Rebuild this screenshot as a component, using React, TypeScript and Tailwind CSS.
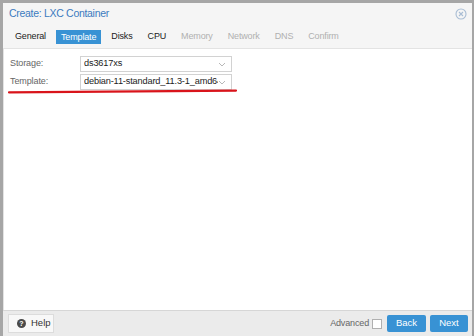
import { useState } from 'react';

const tabs = [
  { label: 'General', enabled: true },
  { label: 'Template', enabled: true },
  { label: 'Disks', enabled: true },
  { label: 'CPU', enabled: true },
  { label: 'Memory', enabled: false },
  { label: 'Network', enabled: false },
  { label: 'DNS', enabled: false },
  { label: 'Confirm', enabled: false },
];

function Chevron() {
  return (
    <svg width="8" height="5" viewBox="0 0 8 5" className="shrink-0">
      <path d="M1 1 L4 4 L7 1" fill="none" stroke="#b8b8b8" strokeWidth="1" />
    </svg>
  );
}

function SelectField({ value }: { value: string }) {
  return (
    <div className="flex items-center w-[152px] h-[16px] border border-[#d2d2d2] bg-white pl-[3px] pr-[5px]">
      <span className="flex-1 overflow-hidden whitespace-nowrap text-[9.2px] tracking-[-0.15px] text-[#222]">{value}</span>
      <Chevron />
    </div>
  );
}

export default function App() {
  const [active] = useState('Template');
  const [advanced, setAdvanced] = useState(false);

  return (
    <div
      className="w-[474px] h-[336px] flex flex-col bg-[#f5f5f5] border-t-[3px] border-l-[3px] border-r-[2px] border-[#a6a6a6] overflow-hidden"
      style={{ fontFamily: '"Liberation Sans", Arial, sans-serif' }}
    >
      <div className="flex items-center justify-between h-[22px] pl-[6px] pr-[5px]">
        <span className="text-[10.5px] tracking-[-0.3px] text-[#3b7bbf]">Create: LXC Container</span>
        <svg width="12" height="12" viewBox="0 0 12 12">
          <circle cx="6" cy="6" r="5" fill="none" stroke="#a9bdd4" strokeWidth="1.1" />
          <path d="M4 4 L8 8 M8 4 L4 8" stroke="#a9bdd4" strokeWidth="1.1" />
        </svg>
      </div>

      <div className="flex items-center h-[23px] pl-[7px] gap-[5px]">
        {tabs.map((t) => (
          <span
            key={t.label}
            className={
              t.label === active
                ? 'px-[5px] h-[14px] leading-[14px] bg-[#3892d4] text-white text-[9px] tracking-[-0.15px]'
                : t.enabled
                ? 'px-[5px] text-[9px] tracking-[-0.15px] text-[#222]'
                : 'px-[5px] text-[9px] tracking-[-0.15px] text-[#b0b0b0]'
            }
          >
            {t.label}
          </span>
        ))}
      </div>

      <div className="flex-1 bg-white border-t border-l border-[#e3e3e3] pl-[6px] pt-[7px]">
        <div className="flex flex-col gap-[2px]">
          <div className="flex items-center">
            <span className="w-[70px] text-[9px] tracking-[-0.1px] text-[#666]">Storage:</span>
            <SelectField value="ds3617xs" />
          </div>
          <div className="flex items-center">
            <span className="w-[70px] text-[9px] tracking-[-0.1px] text-[#666]">Template:</span>
            <SelectField value="debian-11-standard_11.3-1_amd64.tar.zst" />
          </div>
        </div>
        <svg width="232" height="5" viewBox="0 0 232 5" className="block -mt-[1px] -ml-[2px]">
          <path d="M1 3.3 Q115 2.4 228 1.6" fill="none" stroke="#d9141b" strokeWidth="2.2" strokeLinecap="round" />
        </svg>
      </div>

      <div className="flex items-center justify-between h-[26px] border-t border-[#d6d6d6] bg-[#ebebeb] pl-[5px] pr-[3px]">
        <button className="flex items-center gap-[5px] h-[19px] w-[46px] pl-[8px] bg-[#f8f8f8] border border-[#dcdcdc] text-[9.5px] text-[#333]">
          <span className="flex items-center justify-center w-[9px] h-[9px] rounded-full bg-[#4a4a4a] text-white text-[7px] font-bold leading-none">?</span>
          Help
        </button>
        <div className="flex items-center">
          <span className="text-[9px] tracking-[-0.15px] text-[#666] mr-[3px]">Advanced</span>
          <button
            onClick={() => setAdvanced(!advanced)}
            className="w-[10px] h-[10px] border border-[#b0b0b0] bg-white flex items-center justify-center mr-[5px]"
          >
            {advanced && <span className="text-[8px] leading-none">✓</span>}
          </button>
          <button className="h-[17px] w-[39px] bg-[#3892d4] text-white text-[9.5px] rounded-[2px] mr-[4px]">Back</button>
          <button className="h-[17px] w-[38px] bg-[#3892d4] text-white text-[9.5px] rounded-[2px] mr-[1px]">Next</button>
        </div>
      </div>
    </div>
  );
}
